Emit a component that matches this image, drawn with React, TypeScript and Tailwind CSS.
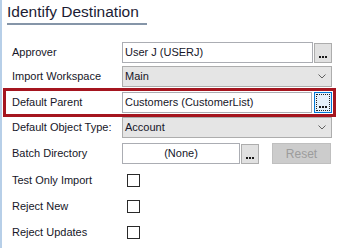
import React from 'react';

const Dots = () => (
  <div className="flex gap-[1px]">
    <span className="w-[2px] h-[2px] bg-[#1a1a1a]" />
    <span className="w-[2px] h-[2px] bg-[#1a1a1a]" />
    <span className="w-[2px] h-[2px] bg-[#1a1a1a]" />
  </div>
);

function BrowseButton({ focused = false }: { focused?: boolean }) {
  if (focused) {
    return (
      <div className="ml-[2px] w-[18px] h-[21px] border border-[#0078d7] bg-[#e5f1fb] p-[1px]">
        <div className="w-full h-full border border-dotted border-[#222] flex items-end justify-center pb-[2px]">
          <Dots />
        </div>
      </div>
    );
  }
  return (
    <div className="ml-[1px] w-[18px] h-[20px] border border-[#adadad] bg-[#e1e1e1] flex items-end justify-center pb-[4px]">
      <Dots />
    </div>
  );
}

function Chevron() {
  return (
    <svg width="8" height="5" viewBox="0 0 8 5" className="text-[#606060]">
      <path d="M0.5 0.5 L4 4 L7.5 0.5" fill="none" stroke="currentColor" strokeWidth="1" />
    </svg>
  );
}

function Select({ value }: { value: string }) {
  return (
    <div className="w-[210px] h-[21px] border border-[#adadad] bg-[#e5e5e5] flex items-center justify-between pl-[2px] pr-[5px]">
      <span>{value}</span>
      <Chevron />
    </div>
  );
}

function Label({ children }: { children: React.ReactNode }) {
  return <div className="w-[110px] shrink-0">{children}</div>;
}

function CheckRow({ label, first = false }: { label: string; first?: boolean }) {
  return (
    <div className={`flex items-center h-[13px] ml-[10px] ${first ? 'mt-[10px]' : 'mt-[13px]'}`}>
      <Label>{label}</Label>
      <div className="ml-[5px] w-[13px] h-[13px] border-[1.5px] border-[#2a2a2a] bg-white" />
    </div>
  );
}

export default function App() {
  return (
    <div className="w-[337px] h-[248px] bg-white overflow-hidden border-l-2 border-[#b7cfe8] font-['Liberation_Sans',Arial,sans-serif] text-[11px] text-[#161628]">
      <div className="ml-[5px] w-[140px] h-[25px] border-b-2 border-[#8595a8] text-[15.5px] leading-[20px] pt-[2px] text-[#1c1c34]">
        Identify Destination
      </div>

      <div className="flex items-center h-[21px] mt-[17px] ml-[10px]">
        <Label>Approver</Label>
        <div className="w-[191px] h-[21px] border border-[#abadb3] bg-white flex items-center pl-[2px]">
          User J (USERJ)
        </div>
        <BrowseButton />
      </div>

      <div className="flex items-center h-[21px] mt-[3px] ml-[10px]">
        <Label>Import Workspace</Label>
        <Select value="Main" />
      </div>

      <div className="ml-[1px] mt-[1px] w-[333px] h-[29px] border-[3px] border-[#a5151f] flex items-center pl-[6px]">
        <Label>Default Parent</Label>
        <div className="w-[190px] h-[21px] border border-[#abadb3] bg-white flex items-center pl-[2px]">
          Customers (CustomerList)
        </div>
        <BrowseButton focused />
      </div>

      <div className="flex items-center h-[21px] ml-[10px]">
        <Label>Default Object Type:</Label>
        <Select value="Account" />
      </div>

      <div className="flex items-center h-[21px] mt-[5px] ml-[10px]">
        <Label>Batch Directory</Label>
        <div className="w-[118px] h-[21px] border border-[#abadb3] bg-white flex items-center justify-center">
          (None)
        </div>
        <BrowseButton />
        <div className="ml-[13px] w-[59px] h-[21px] border border-[#bfbfbf] bg-[#cccccc] flex items-center justify-center text-[12px] text-[#9c9c9c]">
          Reset
        </div>
      </div>

      <CheckRow label="Test Only Import" first />
      <CheckRow label="Reject New" />
      <CheckRow label="Reject Updates" />
    </div>
  );
}
